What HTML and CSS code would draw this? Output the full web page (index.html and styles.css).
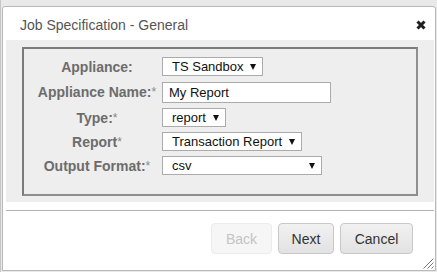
FILE: index.html
```html
<!DOCTYPE html>
<html lang="en">
<head>
  <meta charset="UTF-8">
  <title>Job Specification</title>
  <link rel="stylesheet" href="styles.css">
</head>
<body>
  <div class="dialog">
    <div class="dialog-title">
      <span class="title-text">Job Specification - General</span>
      <button class="close-btn" title="Close">
        <svg width="10" height="10" viewBox="0 0 10 10"><path d="M1.5 1.5L8.5 8.5M8.5 1.5L1.5 8.5" stroke="#1e1e1e" stroke-width="3"/></svg>
      </button>
    </div>

    <div class="dialog-content">
      <fieldset class="job-fieldset">
        <div class="form-grid">
          <label class="field-label" for="appliance">Appliance:</label>
          <span class="select-wrap"><select id="appliance" class="w-appliance"><option>TS Sandbox</option></select></span>

          <label class="field-label" for="appliance-name">Appliance Name:<span class="req">*</span></label>
          <input type="text" id="appliance-name" class="text-input" value="My Report">

          <label class="field-label" for="type">Type:<span class="req">*</span></label>
          <span class="select-wrap"><select id="type" class="w-type"><option>report</option></select></span>

          <label class="field-label" for="report">Report<span class="req">*</span></label>
          <span class="select-wrap"><select id="report" class="w-report"><option>Transaction Report</option></select></span>

          <label class="field-label" for="format">Output Format:<span class="req">*</span></label>
          <span class="select-wrap"><select id="format" class="w-format"><option>csv</option></select></span>
        </div>
      </fieldset>
    </div>

    <div class="dialog-buttons">
      <button class="btn btn-back" disabled>Back</button>
      <button class="btn btn-next">Next</button>
      <button class="btn btn-cancel">Cancel</button>
    </div>

    <div class="resize-handle">
      <svg width="11" height="11" viewBox="0 0 11 11"><path d="M10.5 0.5L0.5 10.5M10.5 4.5L4.5 10.5M10.5 8.5L8.5 10.5" stroke="#7a7a7a" stroke-width="1"/></svg>
    </div>
  </div>
</body>
</html>
```

FILE: styles.css
```css
* {
  box-sizing: border-box;
}
body {
  margin: 0;
  padding: 0;
  background-color: #e9e9e9;
  border-left: 1px solid #c6c6c6;
  font-family: "Liberation Sans", Arial, sans-serif;
  height: 272px;
  overflow: hidden;
}
.dialog {
  position: relative;
  margin: 6px 0 0 1px;
  width: 434px;
  background-color: #fff;
  border: 1px solid #b8b8b8;
  border-radius: 3px 3px 0 0;
}
.dialog-title {
  position: relative;
  height: 33px;
  padding: 3px 0 0 17px;
}
.title-text {
  display: block;
  line-height: 30px;
  font-size: 14px;
  color: #555;
}
.close-btn {
  position: absolute;
  top: 13px;
  right: 9px;
  width: 10px;
  height: 10px;
  padding: 0;
  border: none;
  background: none;
  cursor: pointer;
  line-height: 0;
}
.dialog-content {
  margin: 0 1px 0 3px;
  padding: 7px 16px 6px 16px;
  background-color: #eeeeee;
}
.job-fieldset {
  margin: 0;
  padding: 8px 0 19px 8px;
  border: 2px solid;
  border-color: #7b7b7b #8f8f8f #8f8f8f #7b7b7b;
  min-width: 0;
}
.form-grid {
  display: grid;
  grid-template-columns: 130px auto;
  row-gap: 5px;
  align-items: center;
  justify-items: start;
}
.field-label {
  justify-self: stretch;
  text-align: center;
  font-size: 14px;
  font-weight: bold;
  color: #6c6c6c;
  white-space: nowrap;
}
.req {
  font-weight: normal;
  font-size: 12px;
  color: #888;
  vertical-align: 1px;
}
.text-input {
  margin-top: 1px;
  width: 169px;
  height: 21px;
  padding: 0 6px;
  border: 1px solid #ababab;
  background-color: #fff;
  font-family: "Liberation Sans", Arial, sans-serif;
  font-size: 13px;
  color: #111;
  outline: none;
}
.select-wrap {
  position: relative;
  display: inline-block;
  line-height: 0;
}
.select-wrap::after {
  content: "";
  position: absolute;
  top: 7px;
  right: 7px;
  border-left: 3px solid transparent;
  border-right: 3px solid transparent;
  border-top: 6px solid #111;
  pointer-events: none;
}
.select-wrap select {
  appearance: none;
  -webkit-appearance: none;
  height: 19px;
  padding: 0 0 0 9px;
  border: 1px solid #ababab;
  border-radius: 0;
  background-color: #fff;
  font-family: "Liberation Sans", Arial, sans-serif;
  font-size: 13px;
  color: #111;
  outline: none;
}
.w-appliance {
  width: 101px;
}
.w-type {
  width: 64px;
}
.w-report {
  width: 140px;
}
.w-format {
  width: 160px;
}
.dialog-buttons {
  display: flex;
  justify-content: flex-end;
  gap: 6px;
  margin: 8px 1px 0 3px;
  padding: 12px 21px 16px 0;
  border-top: 1px solid #b0b0b0;
}
.btn {
  height: 31px;
  padding: 0;
  border: 1px solid #c8c8c8;
  border-radius: 4px;
  background: linear-gradient(#f1f1f1, #e2e2e2);
  font-family: "Liberation Sans", Arial, sans-serif;
  font-size: 14px;
  color: #333;
  cursor: pointer;
}
.btn:disabled {
  border-color: #ececec;
  background: #f6f6f6;
  color: #c4c4c4;
  cursor: default;
}
.btn-back {
  width: 61px;
}
.btn-next {
  width: 56px;
}
.btn-cancel {
  width: 73px;
}
.resize-handle {
  position: absolute;
  right: 1px;
  bottom: 1px;
  width: 11px;
  height: 11px;
  line-height: 0;
}
```
